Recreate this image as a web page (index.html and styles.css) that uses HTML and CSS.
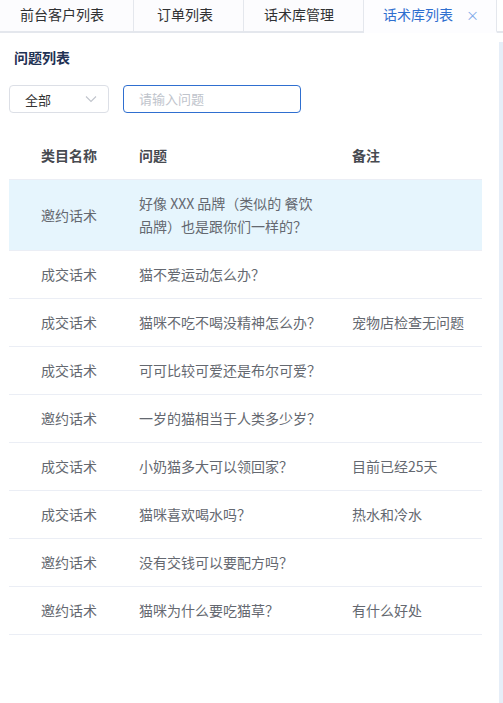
FILE: index.html
```html
<!DOCTYPE html>
<html lang="zh-CN">
<head>
<meta charset="utf-8">
<title>话术库列表</title>
<link rel="stylesheet" href="styles.css">
</head>
<body>
<div class="tabs">
  <div class="tab t1">前台客户列表</div>
  <div class="tab t2">订单列表</div>
  <div class="tab t3">话术库管理</div>
  <div class="tab t4 active">话术库列表<span class="close">×</span></div>
  <div class="tab-rest"></div>
</div>
<div class="main">
  <div class="content">
    <div class="title">问题列表</div>
    <div class="filters">
      <div class="select">
        <span>全部</span>
        <svg class="chev" width="12" height="8" viewBox="0 0 12 8"><path d="M1 1.5 L6 6.5 L11 1.5" fill="none" stroke="#c0c4cc" stroke-width="1.1"/></svg>
      </div>
      <div class="input">请输入问题</div>
    </div>
    <table class="grid">
      <colgroup><col class="c1"><col class="c2"><col class="c3"></colgroup>
      <thead>
        <tr><th class="cat">类目名称</th><th>问题</th><th>备注</th></tr>
      </thead>
      <tbody>
        <tr class="hl"><td class="cat">邀约话术</td><td>好像 XXX 品牌（类似的 餐饮<br>品牌）也是跟你们一样的？</td><td></td></tr>
        <tr><td class="cat">成交话术</td><td>猫不爱运动怎么办？</td><td></td></tr>
        <tr><td class="cat">成交话术</td><td>猫咪不吃不喝没精神怎么办？</td><td>宠物店检查无问题</td></tr>
        <tr><td class="cat">成交话术</td><td>可可比较可爱还是布尔可爱？</td><td></td></tr>
        <tr><td class="cat">邀约话术</td><td>一岁的猫相当于人类多少岁？</td><td></td></tr>
        <tr><td class="cat">成交话术</td><td>小奶猫多大可以领回家？</td><td>目前已经25天</td></tr>
        <tr><td class="cat">成交话术</td><td>猫咪喜欢喝水吗？</td><td>热水和冷水</td></tr>
        <tr><td class="cat">邀约话术</td><td>没有交钱可以要配方吗？</td><td></td></tr>
        <tr><td class="cat">邀约话术</td><td>猫咪为什么要吃猫草？</td><td>有什么好处</td></tr>
      </tbody>
    </table>
  </div>
  <div class="scroll"></div>
</div>
</body>
</html>
```
FILE: styles.css
```css
* { box-sizing: border-box; }
html, body { margin: 0; padding: 0; background: #fff; }
body {
  width: 503px;
  height: 703px;
  overflow: hidden;
  font-family: "Noto Sans CJK SC", "Liberation Sans", sans-serif;
  font-size: 14px;
  color: #606266;
}
.tabs {
  display: flex;
  height: 33px;
  background: #fcfcfe;
}
.tab {
  height: 33px;
  line-height: 29px;
  font-size: 14px;
  color: #303133;
  border-right: 1px solid #e4e7ed;
  border-bottom: 2px solid #e4e7ed;
  white-space: nowrap;
}
.t1 { width: 134px; padding-left: 20px; }
.t2 { width: 110px; padding-left: 23px; }
.t3 { width: 120px; padding-left: 20px; }
.t4 { width: 133px; padding-left: 19px; }
.tab.active {
  color: #2f6fcf;
  border-bottom-color: transparent;
  background: #fdfdff;
}
.close {
  font-size: 13px;
  color: #7aa6e8;
  margin-left: 13px;
}
.tab-rest {
  flex: 1;
  border-bottom: 2px solid #e4e7ed;
  background: #fff;
}
.main {
  display: flex;
}
.content {
  flex: 1;
  padding: 13px 17px 0 9px;
}
.scroll {
  width: 4px;
  margin-top: 9px;
  height: 661px;
  background: #e6eef8;
}
.title {
  margin-left: 5px;
  font-size: 14px;
  font-weight: 700;
  color: #1f3254;
  line-height: 22px;
}
.filters {
  display: flex;
  gap: 14px;
  margin-top: 17px;
}
.select {
  width: 100px;
  height: 28px;
  border: 1px solid #dcdfe6;
  border-radius: 4px;
  display: flex;
  align-items: center;
  justify-content: space-between;
  padding: 0 11px 0 15px;
  color: #333;
  font-size: 13px;
}
.chev { display: block; }
.input {
  width: 178px;
  height: 28px;
  border: 1px solid #2f6fd0;
  border-radius: 4px;
  padding-left: 15px;
  line-height: 26px;
  font-size: 13px;
  color: #c0c4cc;
}
.grid {
  margin-top: 19px;
  width: 473px;
  border-collapse: collapse;
  table-layout: fixed;
}
.c1 { width: 120px; }
.c2 { width: 213px; }
.c3 { width: 140px; }
.grid th, .grid td {
  padding: 12px 10px;
  line-height: 23px;
  text-align: left;
  vertical-align: middle;
  border-bottom: 1px solid #ebeef5;
  font-size: 14px;
}
.grid th {
  font-weight: 700;
  color: #474a50;
}
.grid td { color: #646870; }
.grid .cat { text-align: center; }
.grid tr.hl td { background: #e6f5fd; }
```
